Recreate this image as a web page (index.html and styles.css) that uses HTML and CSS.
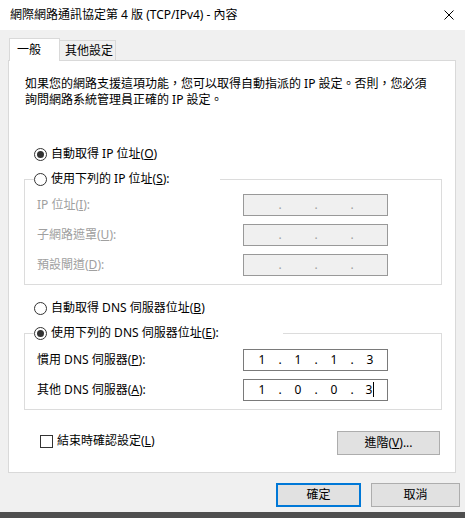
FILE: index.html
```html
<!DOCTYPE html>
<html lang="zh-Hant">
<head>
<meta charset="utf-8">
<title>網際網路通訊協定第 4 版 (TCP/IPv4) - 內容</title>
<link rel="stylesheet" href="styles.css">
</head>
<body>
<div class="window">
  <div class="titlebar">
    <span class="title">網際網路通訊協定第 4 版 (TCP/IPv4) - 內容</span>
    <svg class="close" viewBox="0 0 10 10" width="10" height="10"><path d="M0.5 0.5 L9.5 9.5 M9.5 0.5 L0.5 9.5" stroke="#000" stroke-width="1" fill="none"/></svg>
  </div>
  <div class="client">
    <div class="tabs">
      <div class="tab tab-active">一般</div>
      <div class="tab tab-inactive">其他設定</div>
    </div>
    <div class="panel">
      <div class="desc">
        <div class="desc-line">如果您的網路支援這項功能，您可以取得自動指派的 IP 設定。否則，您必須</div>
        <div class="desc-line">詢問網路系統管理員正確的 IP 設定。</div>
      </div>

      <div class="radio-row first-radio"><span class="radio checked"></span><span>自動取得 IP 位址(<u>O</u>)</span></div>
      <fieldset class="group">
        <legend class="legend legend-ip"><span class="radio-row"><span class="radio"></span><span>使用下列的 IP 位址(<u>S</u>):</span></span></legend>
        <div class="rows rows-ip">
          <span class="label disabled">IP 位址(<u>I</u>):</span>
          <div class="ipbox ipbox-disabled"><span class="oct"></span><span class="dot">.</span><span class="oct"></span><span class="dot">.</span><span class="oct"></span><span class="dot">.</span><span class="oct"></span></div>
          <span class="label disabled">子網路遮罩(<u>U</u>):</span>
          <div class="ipbox ipbox-disabled"><span class="oct"></span><span class="dot">.</span><span class="oct"></span><span class="dot">.</span><span class="oct"></span><span class="dot">.</span><span class="oct"></span></div>
          <span class="label disabled">預設閘道(<u>D</u>):</span>
          <div class="ipbox ipbox-disabled"><span class="oct"></span><span class="dot">.</span><span class="oct"></span><span class="dot">.</span><span class="oct"></span><span class="dot">.</span><span class="oct"></span></div>
        </div>
      </fieldset>

      <div class="radio-row dns-radio"><span class="radio"></span><span>自動取得 DNS 伺服器位址(<u>B</u>)</span></div>
      <fieldset class="group">
        <legend class="legend legend-dns"><span class="radio-row"><span class="radio checked"></span><span>使用下列的 DNS 伺服器位址(<u>E</u>):</span></span></legend>
        <div class="rows rows-dns">
          <span class="label">慣用 DNS 伺服器(<u>P</u>):</span>
          <div class="ipbox"><span class="oct">1</span><span class="dot">.</span><span class="oct">1</span><span class="dot">.</span><span class="oct">1</span><span class="dot">.</span><span class="oct">3</span></div>
          <span class="label">其他 DNS 伺服器(<u>A</u>):</span>
          <div class="ipbox"><span class="oct">1</span><span class="dot">.</span><span class="oct">0</span><span class="dot">.</span><span class="oct">0</span><span class="dot">.</span><span class="oct">3<span class="caret"></span></span></div>
        </div>
      </fieldset>

      <div class="bottom-row">
        <div class="check-row"><span class="checkbox"></span><span>結束時確認設定(<u>L</u>)</span></div>
        <div class="btn btn-adv">進階(<u>V</u>)...</div>
      </div>
    </div>
    <div class="dialog-buttons">
      <div class="btn btn-ok">確定</div>
      <div class="btn btn-cancel">取消</div>
    </div>
  </div>
  <div class="strip"></div>
</div>
</body>
</html>
```

FILE: styles.css
```css
* { box-sizing: border-box; }
html, body { margin: 0; padding: 0; }
body {
  width: 465px;
  height: 518px;
  overflow: hidden;
  background: #f0f0f0;
  color: #000;
  font-family: "Noto Sans", "Noto Sans CJK TC", sans-serif;
  font-size: 12px;
}
u { text-decoration: underline; text-underline-offset: 1px; }

.window { display: flex; flex-direction: column; height: 518px; }

.titlebar {
  height: 30px;
  flex: none;
  background: #fff;
  display: flex;
  align-items: center;
  justify-content: space-between;
  padding: 0 11px 0 10px;
}
.title { line-height: 16px; }
.close { display: block; }

.client { flex: 1; padding: 8px 5px 0 8px; }

.tabs { display: flex; align-items: flex-end; height: 22px; padding-left: 1px; }
.tab { border: 1px solid #d9d9d9; border-bottom: none; line-height: 18px; }
.tab-active {
  width: 51px;
  height: 23px;
  margin-bottom: -1px;
  background: #fff;
  padding: 2px 0 0 7px;
  position: relative;
  z-index: 1;
}
.tab-inactive {
  width: 57px;
  height: 20px;
  margin-left: -1px;
  background: #f0f0f0;
  padding: 1px 0 0 5px;
}

.panel {
  background: #fff;
  border: 1px solid #d9d9d9;
  margin-right: 4px;
  padding: 14px 13px 17px 15px;
}
.desc { padding-left: 1px; }
.desc-line { line-height: 17px; height: 15px; white-space: nowrap; }
.desc-line + .desc-line { margin-top: 1px; }

.radio-row { display: flex; align-items: center; height: 20px; margin-left: 10px; line-height: 16px; white-space: nowrap; }
.legend .radio-row { margin-left: 0; }
.first-radio { margin-top: 38px; }
.dns-radio { margin-top: 13px; }
.radio {
  width: 13px; height: 13px;
  border: 1px solid #333;
  border-radius: 50%;
  margin-right: 4px;
  background: #fff;
  display: flex;
  align-items: center;
  justify-content: center;
  flex: none;
}
.radio.checked::after {
  content: "";
  width: 7px; height: 7px;
  border-radius: 50%;
  background: #333;
}

.group {
  margin: 5px 0 0 0;
  padding: 0;
  width: 418px;
  border: 1px solid #dcdcdc;
  min-width: 0;
}
.legend { padding: 0; margin-left: 9px; }
.legend-ip { width: 186px; }
.legend-dns { width: 249px; }

.rows {
  display: grid;
  grid-template-columns: 206px 145px;
  grid-auto-rows: 22px;
  row-gap: 8px;
  align-items: center;
  padding: 5px 0 8px 12px;
}
.rows-dns { padding-top: 6px; }
.label { line-height: 16px; white-space: nowrap; }
.disabled { color: #a0a0a0; }

.ipbox {
  display: flex;
  height: 22px;
  width: 145px;
  border: 1px solid #7a7a7a;
  background: #fff;
  padding-left: 4px;
  line-height: 20px;
}
.ipbox-disabled { border-color: #999; background: #f0f0f0; color: #a0a0a0; }
.oct { width: 28px; text-align: center; }
.dot { width: 8px; text-align: center; }
.caret {
  display: inline-block;
  width: 1px;
  height: 15px;
  background: #000;
  vertical-align: -3px;
  margin-left: 1px;
}

.bottom-row { display: flex; justify-content: space-between; align-items: flex-start; margin-top: 21px; }
.check-row { display: flex; align-items: center; height: 20px; margin-left: 16px; line-height: 16px; }
.checkbox { width: 13px; height: 13px; border: 1px solid #333; background: #fff; margin-right: 4px; flex: none; }

.btn {
  display: flex;
  align-items: center;
  justify-content: center;
  height: 24px;
  background: #e1e1e1;
  border: 1px solid #adadad;
  line-height: 16px;
}
.btn-adv { width: 103px; margin-right: 2px; }

.dialog-buttons { display: flex; justify-content: flex-end; gap: 10px; margin-top: 10px; }
.btn-ok { width: 85px; border: 2px solid #0078d7; }
.btn-cancel { width: 89px; }

.strip { height: 6px; flex: none; background: #4f4f4f; }
```
